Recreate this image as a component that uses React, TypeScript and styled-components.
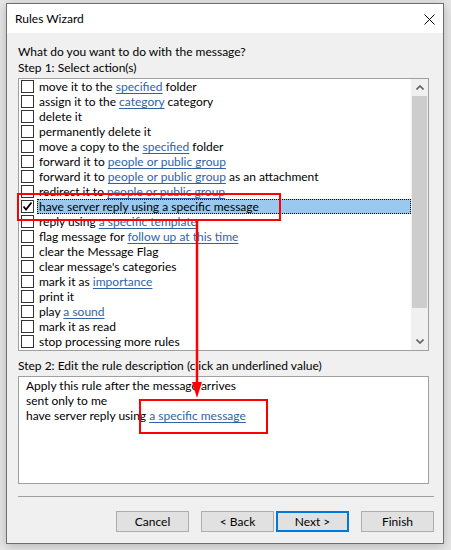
import { createGlobalStyle, styled } from 'styled-components';

type Part = { text: string; link?: boolean };
type Action = { parts: Part[]; checked?: boolean };

const t = (text: string): Part => ({ text });
const l = (text: string): Part => ({ text, link: true });

const ACTIONS: Action[] = [
  { parts: [t('move it to the '), l('specified'), t(' folder')] },
  { parts: [t('assign it to the '), l('category'), t(' category')] },
  { parts: [t('delete it')] },
  { parts: [t('permanently delete it')] },
  { parts: [t('move a copy to the '), l('specified'), t(' folder')] },
  { parts: [t('forward it to '), l('people or public group')] },
  { parts: [t('forward it to '), l('people or public group'), t(' as an attachment')] },
  { parts: [t('redirect it to '), l('people or public group')] },
  { parts: [t('have server reply using a specific message')], checked: true },
  { parts: [t('reply using '), l('a specific template')] },
  { parts: [t('flag message for '), l('follow up at this time')] },
  { parts: [t('clear the Message Flag')] },
  { parts: [t("clear message's categories")] },
  { parts: [t('mark it as '), l('importance')] },
  { parts: [t('print it')] },
  { parts: [t('play '), l('a sound')] },
  { parts: [t('mark it as read')] },
  { parts: [t('stop processing more rules')] },
];

const DESCRIPTION: Part[][] = [
  [t('Apply this rule after the message arrives')],
  [t('sent only to me')],
  [t('have server reply using '), l('a specific message')],
];

const App = () => {
  return (
    <Page>
      <GlobalStyle />
      <Window>
        <TitleBar>
          <span>Rules Wizard</span>
          <svg width="11" height="11" viewBox="0 0 11 11">
            <path d="M0.5 0.5 L10.5 10.5 M10.5 0.5 L0.5 10.5" stroke="#000" strokeWidth="1" />
          </svg>
        </TitleBar>
        <Body>
          <Label>What do you want to do with the message?</Label>
          <Label>Step 1: Select action(s)</Label>
          <ListBox>
            <Rows>
              {ACTIONS.map((a, i) => (
                <Row key={i}>
                  <Check>
                    {a.checked && (
                      <svg width="11" height="11" viewBox="0 0 11 11">
                        <path d="M1.5 5.5 L4 8.5 L9.5 1.5" stroke="#000" strokeWidth="1.8" fill="none" />
                      </svg>
                    )}
                  </Check>
                  <ItemText $selected={a.checked}>
                    {a.parts.map((p, j) =>
                      p.link ? <Link key={j}>{p.text}</Link> : <span key={j}>{p.text}</span>
                    )}
                  </ItemText>
                </Row>
              ))}
            </Rows>
            <ScrollBar>
              <ArrowButton>
                <svg width="8" height="5" viewBox="0 0 8 5">
                  <polyline points="0.5,4.5 4,1 7.5,4.5" stroke="#606060" strokeWidth="1.6" fill="none" />
                </svg>
              </ArrowButton>
              <Track>
                <Thumb />
              </Track>
              <ArrowButton>
                <svg width="8" height="5" viewBox="0 0 8 5">
                  <polyline points="0.5,0.5 4,4 7.5,0.5" stroke="#606060" strokeWidth="1.6" fill="none" />
                </svg>
              </ArrowButton>
            </ScrollBar>
          </ListBox>
          <StepTwo>Step 2: Edit the rule description (click an underlined value)</StepTwo>
          <DescBox>
            {DESCRIPTION.map((line, i) => (
              <DescLine key={i}>
                {line.map((p, j) =>
                  p.link ? <Link key={j}>{p.text}</Link> : <span key={j}>{p.text}</span>
                )}
              </DescLine>
            ))}
          </DescBox>
          <Separator />
          <ButtonRow>
            <Button>Cancel</Button>
            <ButtonPair>
              <Button>&lt; Back</Button>
              <Button $primary>Next &gt;</Button>
            </ButtonPair>
            <Button>Finish</Button>
          </ButtonRow>
        </Body>
      </Window>
      <Marks width="451" height="550" viewBox="0 0 451 550">
        <rect x="18" y="194" width="262" height="26" stroke="#f00" strokeWidth="2" fill="none" />
        <line x1="197" y1="221" x2="197" y2="384" stroke="#f00" strokeWidth="2.5" />
        <polygon points="192,382 202,382 197,398" fill="#f00" />
        <rect x="140" y="400" width="127" height="33" stroke="#f00" strokeWidth="2" fill="none" />
      </Marks>
    </Page>
  );
};

export default App;

const GlobalStyle = createGlobalStyle`
  body {
    margin: 0;
    background: #e6e6e6;
    font-family: Lato, "Noto Sans", sans-serif;
    font-size: 12px;
    color: #000;
  }
`;

const Page = styled.div`
  position: relative;
  width: 451px;
  height: 550px;
  overflow: hidden;
  padding: 3px 0 0 6px;
  box-sizing: border-box;
`;

const Window = styled.div`
  width: 438px;
  height: 541px;
  box-sizing: border-box;
  border: 1px solid #6e6e6e;
  background: #f0f0f0;
  box-shadow: 0 2px 10px rgba(0, 0, 0, 0.22);
  display: flex;
  flex-direction: column;
`;

const TitleBar = styled.div`
  height: 29px;
  background: #fff;
  display: flex;
  align-items: center;
  justify-content: space-between;
  padding: 0 8px 0 8px;
  font-size: 12px;
  svg {
    margin-top: 1px;
  }
`;

const Body = styled.div`
  padding: 11px 9px 0 11px;
  display: flex;
  flex-direction: column;
`;

const Label = styled.div`
  line-height: 16px;
  height: 16px;
  white-space: nowrap;
`;

const ListBox = styled.div`
  margin-top: 2px;
  width: 411px;
  height: 273px;
  box-sizing: border-box;
  border: 1px solid #a0a0a0;
  background: #fff;
  display: flex;
`;

const Rows = styled.div`
  flex: 1;
  display: flex;
  flex-direction: column;
`;

const Row = styled.div`
  height: 15px;
  display: flex;
  align-items: center;
  padding-left: 2px;
`;

const Check = styled.div`
  width: 13px;
  height: 13px;
  box-sizing: border-box;
  border: 1px solid #333;
  background: #fff;
  display: flex;
  align-items: center;
  justify-content: center;
  flex: none;
`;

const ItemText = styled.div<{ $selected?: boolean }>`
  margin-left: 3px;
  height: 15px;
  box-sizing: border-box;
  line-height: 13px;
  padding: 0 1px;
  white-space: nowrap;
  border: 1px ${(p) => (p.$selected ? 'dotted #000' : 'solid transparent')};
  background: ${(p) => (p.$selected ? '#99c9ef' : 'transparent')};
  flex: ${(p) => (p.$selected ? 1 : 'none')};
`;

const Link = styled.span`
  color: #2f63a6;
  text-decoration: underline;
  text-underline-offset: 2px;
`;

const ScrollBar = styled.div`
  width: 17px;
  background: #f0f0f0;
  display: flex;
  flex-direction: column;
`;

const ArrowButton = styled.div`
  height: 17px;
  display: flex;
  align-items: center;
  justify-content: center;
`;

const Track = styled.div`
  flex: 1;
  display: flex;
  flex-direction: column;
  padding: 0 1px;
`;

const Thumb = styled.div`
  height: 212px;
  background: #cdcdcd;
`;

const StepTwo = styled(Label)`
  margin-top: 7px;
`;

const DescBox = styled.div`
  margin-top: 2px;
  width: 411px;
  height: 108px;
  box-sizing: border-box;
  border: 1px solid #a0a0a0;
  background: #fff;
  padding: 1px 7px;
`;

const DescLine = styled.div`
  line-height: 15px;
  white-space: nowrap;
`;

const Separator = styled.div`
  margin-top: 12px;
  height: 1px;
  background: #a0a0a0;
`;

const ButtonRow = styled.div`
  margin-top: 14px;
  display: flex;
  justify-content: flex-end;
  gap: 12px;
`;

const ButtonPair = styled.div`
  display: flex;
  gap: 2px;
`;

const Button = styled.button<{ $primary?: boolean }>`
  width: 73px;
  height: 21px;
  box-sizing: border-box;
  border: ${(p) => (p.$primary ? '2px solid #0078d7' : '1px solid #adadad')};
  background: #e1e1e1;
  font-family: Lato, "Noto Sans", sans-serif;
  font-size: 12px;
  color: #000;
  padding: 0;
  line-height: 1;
`;

const Marks = styled.svg`
  position: absolute;
  left: 0;
  top: 0;
  pointer-events: none;
`;
